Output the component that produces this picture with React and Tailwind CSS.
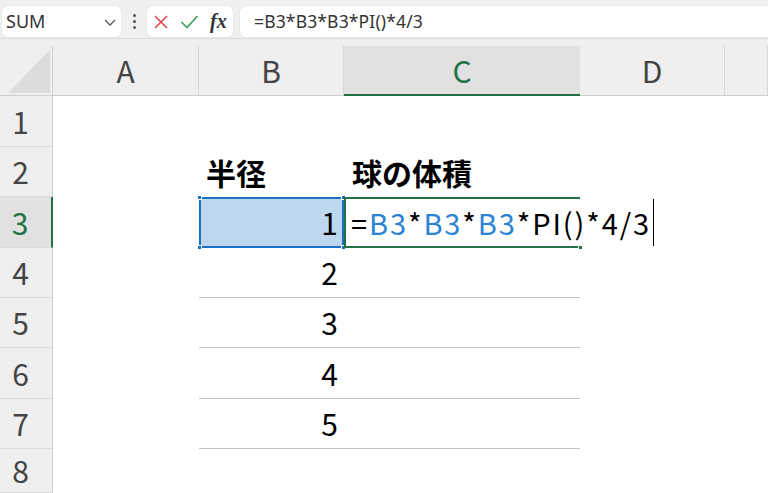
import React from "react";

const cols = [
  { key: "A", w: "w-[146px]" },
  { key: "B", w: "w-[145px]" },
  { key: "C", w: "w-[236px]" },
  { key: "D", w: "w-[145px]" },
  { key: "E", w: "flex-1" },
];

const rows = [
  { n: 1, h: "h-[51px]" },
  { n: 2, h: "h-[50px]", b: "半径", c: "球の体積" },
  { n: 3, h: "h-[51px]", active: true },
  { n: 4, h: "h-[50px]", b: "2", line: true },
  { n: 5, h: "h-[50px]", b: "3", line: true },
  { n: 6, h: "h-[51px]", b: "4", line: true },
  { n: 7, h: "h-[50px]", b: "5", line: true },
  { n: 8, h: "h-[44px]" },
];

function Handle({ className }) {
  return (
    <span
      className={`absolute w-[5px] h-[5px] bg-[#1d6fc4] border border-white ${className}`}
    />
  );
}

function Toolbar() {
  return (
    <div className="h-[39px] bg-[#f0f0f0] border-b border-[#dcdcdc] flex items-start pt-[6px] pl-[2px] gap-0">
      <div className="w-[119px] h-[31px] bg-white rounded-[5px] shadow-[0_0_1px_rgba(0,0,0,0.25)] flex items-center justify-between pl-[4px] pr-[4px]">
        <span className="text-[18px] text-[#333] font-['Noto_Sans',sans-serif]">SUM</span>
        <svg width="14" height="10" viewBox="0 0 14 10">
          <path d="M2 3 L7 8 L12 3" fill="none" stroke="#555" strokeWidth="1.3" />
        </svg>
      </div>
      <div className="w-[26px] h-[31px] flex flex-col items-center justify-center gap-[3px]">
        <span className="w-[3px] h-[3px] rounded-full bg-[#555]" />
        <span className="w-[3px] h-[3px] rounded-full bg-[#555]" />
        <span className="w-[3px] h-[3px] rounded-full bg-[#555]" />
      </div>
      <div className="w-[86px] h-[31px] bg-white rounded-[5px] shadow-[0_0_1px_rgba(0,0,0,0.25)] flex items-center pl-[6px] gap-[11px]">
        <svg width="16" height="16" viewBox="0 0 16 16">
          <path d="M2 2 L14 14 M14 2 L2 14" stroke="#e0454a" strokeWidth="1.6" fill="none" />
        </svg>
        <svg width="19" height="16" viewBox="0 0 19 16">
          <path d="M1.5 8 L7 13.5 L17.5 2" stroke="#3b9e57" strokeWidth="1.6" fill="none" />
        </svg>
        <span className="text-[20px] italic font-bold text-[#333] font-['Liberation_Serif',serif] leading-none -mt-[2px]">
          fx
        </span>
      </div>
      <div className="ml-[7px] flex-1 h-[31px] bg-white rounded-l-[5px] shadow-[0_0_1px_rgba(0,0,0,0.25)] flex items-center pl-[14px]">
        <span className="text-[17.5px] text-[#333] font-['Noto_Sans',sans-serif] tracking-[0.15px]">
          =B3*B3*B3*PI()*4/3
        </span>
      </div>
    </div>
  );
}

function Header() {
  return (
    <div className="h-[57px] bg-[#efefef] flex items-end">
      <div className="w-[53px] h-[50px] border-r border-b border-[#cfcfcf] flex items-end pl-[8px] pb-[2px]">
        <svg width="42" height="43" viewBox="0 0 42 43">
          <path d="M42 0 L42 43 L0 43 Z" fill="#dcdcdc" />
        </svg>
      </div>
      {cols.map((col) =>
        col.key === "C" ? (
          <div
            key={col.key}
            className={`${col.w} h-[50px] bg-[#e1e1e1] border-b-2 border-[#217346] flex items-center justify-center text-[30px] text-[#217346]`}
          >
            {col.key}
          </div>
        ) : (
          <div
            key={col.key}
            className={`${col.w} h-[50px] border-r border-b border-[#d6d6d6] border-b-[#cfcfcf] flex items-center justify-center text-[30px] text-[#444]`}
          >
            {col.key === "E" ? "" : col.key}
          </div>
        )
      )}
    </div>
  );
}

function Row({ row }) {
  const isActive = row.active;
  return (
    <div className={`${row.h} flex`}>
      <div
        className={`w-[53px] shrink-0 flex items-center justify-center pr-[11px] text-[30px] ${
          isActive
            ? "bg-[#e1e1e1] text-[#217346] border-r-2 border-[#217346]"
            : "bg-[#efefef] text-[#444] border-r border-[#cfcfcf]"
        } border-b border-b-[#dadada]`}
      >
        {row.n}
      </div>
      <div className="w-[146px] shrink-0 bg-white" />
      {isActive ? (
        <>
          <div className="relative w-[145px] shrink-0 bg-[#bdd7ee] border-2 border-[#1d6fc4] flex items-center justify-end pr-[4px] text-[30px] text-black">
            1
            <Handle className="-left-[4px] -top-[4px]" />
            <Handle className="-right-[4px] -top-[4px]" />
            <Handle className="-left-[4px] -bottom-[4px]" />
            <Handle className="-right-[4px] -bottom-[4px]" />
          </div>
          <div className="relative w-[236px] shrink-0 border-y-2 border-l-2 border-[#217346] flex items-center pl-[5px] text-[29px] text-black whitespace-nowrap overflow-visible tracking-[1.9px]">
            <span>=</span>
            <span className="text-[#2b83d6]">B3</span>
            <span>*</span>
            <span className="text-[#2b83d6]">B3</span>
            <span>*</span>
            <span className="text-[#2b83d6]">B3</span>
            <span>*PI()*4/3</span>
            <span className="absolute left-[307px] top-0 w-[1px] h-[47px] bg-black" />
            <span className="absolute -right-[3px] -bottom-[4px] w-[5px] h-[5px] bg-[#217346] border border-white" />
          </div>
        </>
      ) : (
        <>
          <div
            className={`w-[145px] shrink-0 flex items-center text-black ${
              row.line ? "border-b border-[#c4c4c4]" : ""
            } ${
              row.n === 2
                ? "justify-start pl-[7px] font-bold text-[30px]"
                : "justify-end pr-[6px] text-[30px]"
            }`}
          >
            {row.b}
          </div>
          <div
            className={`w-[236px] shrink-0 flex items-center text-black ${
              row.line ? "border-b border-[#c4c4c4]" : ""
            } ${row.n === 2 ? "pl-[8px] font-bold text-[30px]" : ""}`}
          >
            {row.c}
          </div>
        </>
      )}
      <div className="flex-1 bg-white" />
    </div>
  );
}

export default function App() {
  return (
    <div className="w-[768px] h-[493px] overflow-hidden bg-white font-['Noto_Sans_CJK_JP',sans-serif]">
      <Toolbar />
      <Header />
      {rows.map((row) => (
        <Row key={row.n} row={row} />
      ))}
    </div>
  );
}
